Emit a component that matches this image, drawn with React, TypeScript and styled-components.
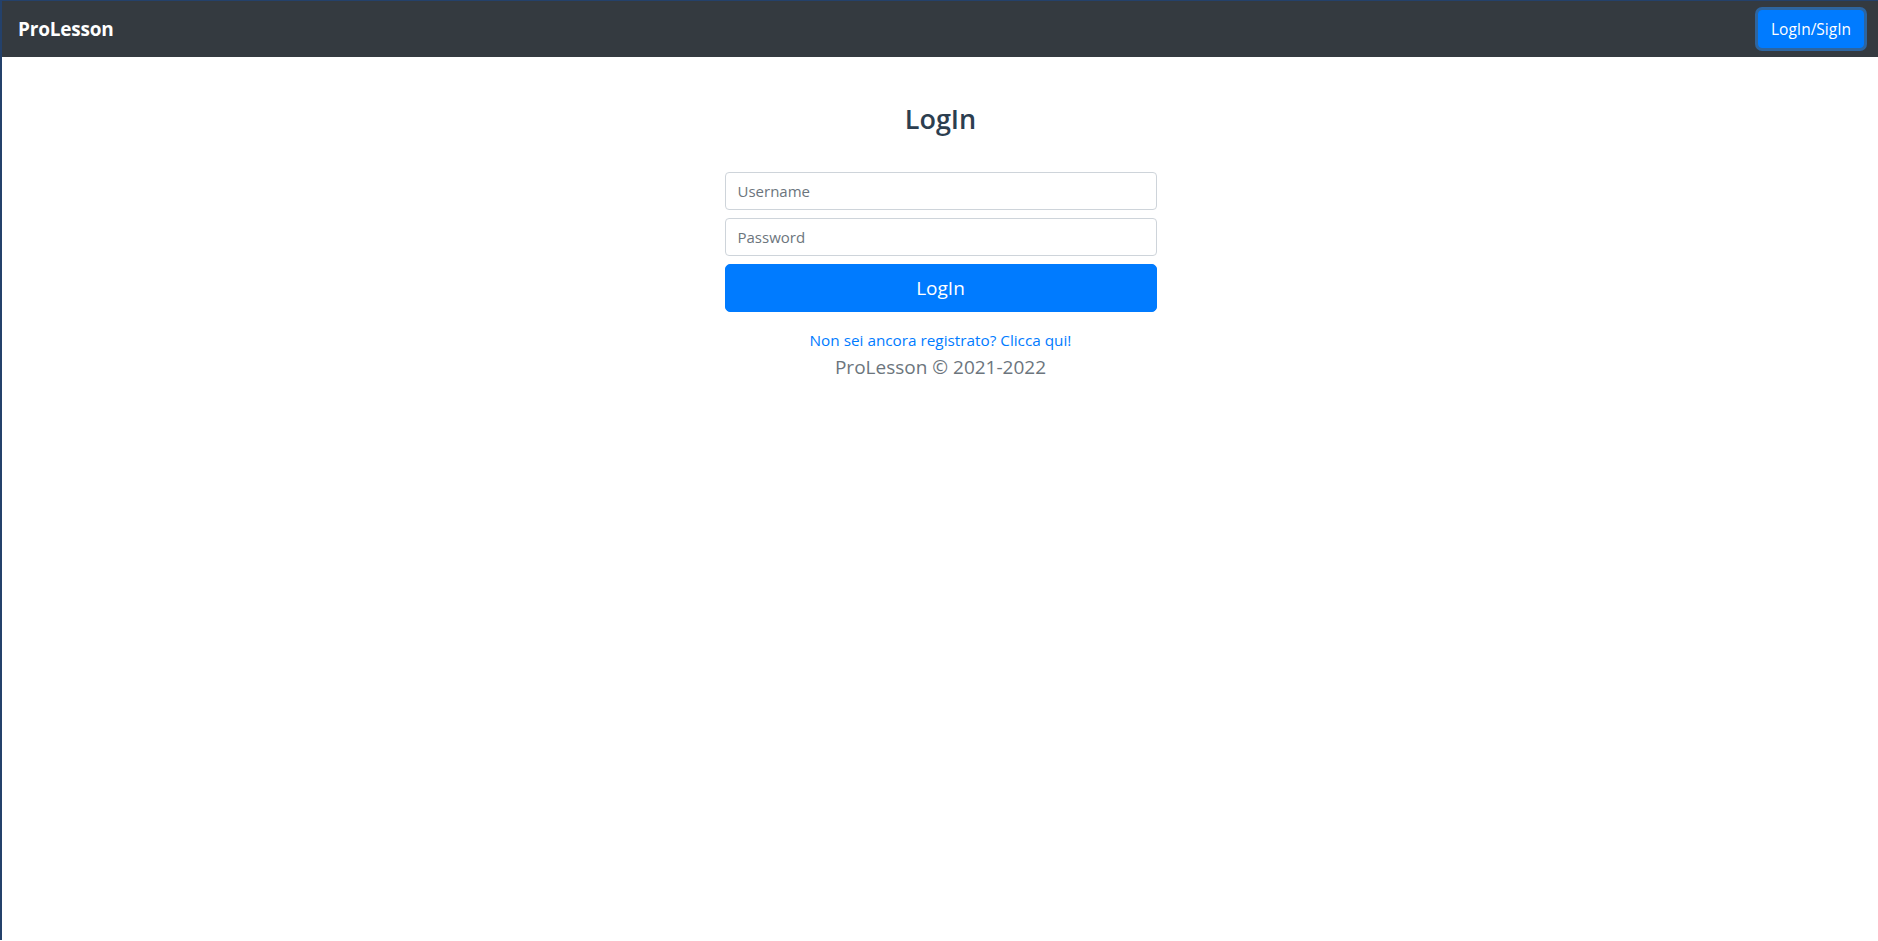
import React from "react";
import styled, { createGlobalStyle } from "styled-components";

const GlobalStyle = createGlobalStyle`
	html, body {
		margin: 0;
		padding: 0;
		background: #ffffff;
	}
	body {
		font-family: "Open Sans", "Noto Sans", "Liberation Sans", sans-serif;
		font-size: 16px;
		line-height: 1.5;
		color: #212529;
		border-left: 2px solid #24416b;
		border-top: 1px solid #24416b;
		min-height: 940px;
		box-sizing: border-box;
	}
	*, *::before, *::after {
		box-sizing: border-box;
	}
`;

const Navbar = styled.nav`
	display: flex;
	align-items: center;
	justify-content: space-between;
	height: 56px;
	padding: 8px 14px 8px 16px;
	background: #343a40;
`;

const Brand = styled.a`
	color: #ffffff;
	font-size: 19px;
	font-weight: 700;
	line-height: 30px;
	text-decoration: none;
	letter-spacing: -0.2px;
`;

const NavButton = styled.button`
	height: 38px;
	padding: 0 12px;
	border: 1px solid #007bff;
	border-radius: 4px;
	background: #007bff;
	color: #ffffff;
	font-family: inherit;
	font-size: 15.5px;
	box-shadow: 0 0 0 3px rgba(38, 143, 255, 0.5);
	cursor: pointer;
`;

const Main = styled.main`
	display: flex;
	flex-direction: column;
	align-items: center;
	padding: 45px 0 0 1px;
`;

const Title = styled.h3`
	margin: 0 0 36px;
	font-size: 27px;
	font-weight: 600;
	line-height: 34px;
	color: #2c3e50;
`;

const Form = styled.form`
	display: flex;
	flex-direction: column;
	gap: 8px;
	width: 432px;
`;

const Input = styled.input`
	height: 38px;
	padding: 6px 12px;
	border: 1px solid #ced4da;
	border-radius: 4px;
	font-family: inherit;
	font-size: 15px;
	color: #495057;
	outline: none;

	&::placeholder {
		color: #6c757d;
	}
`;

const SubmitButton = styled.button`
	height: 48px;
	border: 1px solid #007bff;
	border-radius: 5px;
	background: #007bff;
	color: #ffffff;
	font-family: inherit;
	font-size: 19px;
	cursor: pointer;
`;

const RegisterLink = styled.a`
	margin-top: 16px;
	color: #007bff;
	font-size: 15.3px;
	line-height: 24px;
	text-decoration: none;
`;

const Footer = styled.p`
	margin: 0;
	color: #6c757d;
	font-size: 19px;
	line-height: 30px;
`;

export default function App() {
	return (
		<>
			<GlobalStyle />
			<Navbar>
				<Brand href="#">ProLesson</Brand>
				<NavButton type="button">LogIn/SigIn</NavButton>
			</Navbar>
			<Main>
				<Title>LogIn</Title>
				<Form onSubmit={(e) => e.preventDefault()}>
					<Input type="text" placeholder="Username" />
					<Input type="password" placeholder="Password" />
					<SubmitButton type="submit">LogIn</SubmitButton>
				</Form>
				<RegisterLink href="#">Non sei ancora registrato? Clicca qui!</RegisterLink>
				<Footer>ProLesson © 2021-2022</Footer>
			</Main>
		</>
	);
}
